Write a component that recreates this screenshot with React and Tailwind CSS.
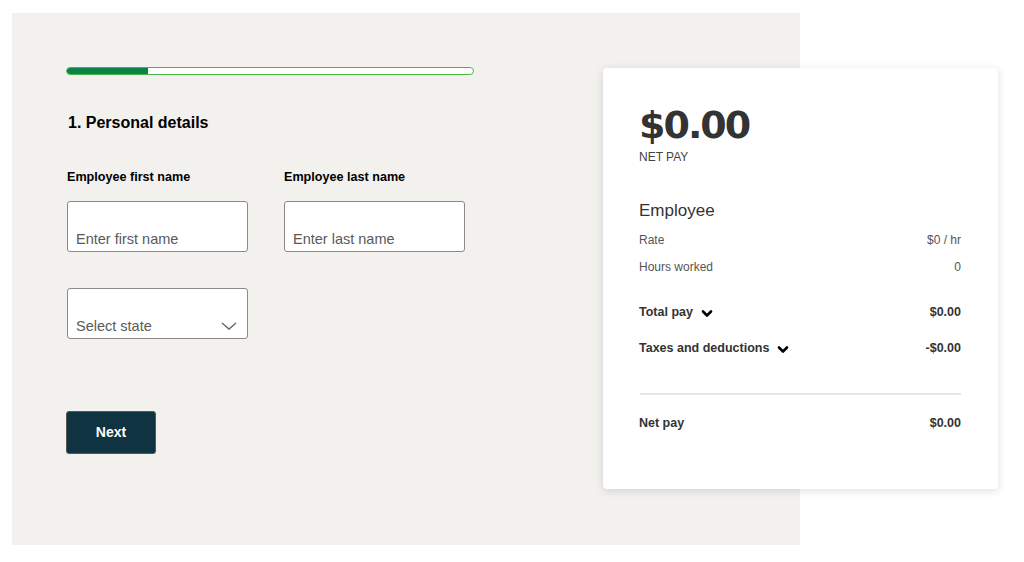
import React from "react";

const Chevron = ({ className }) => (
  <svg className={className} viewBox="0 0 12 8" fill="none" stroke="currentColor" strokeWidth={2.6} strokeLinecap="round" strokeLinejoin="round">
    <path d="M2 2l4 4 4-4" />
  </svg>
);

function TextField({ label, placeholder }) {
  return (
    <div className="w-[181px]">
      <label className="block text-[12.6px] font-bold text-black leading-[14px] h-[14px]">{label}</label>
      <div className="mt-[17px] h-[51px] bg-white border border-[#8a8a8a] rounded-[3px] px-2 flex items-end pb-0">
        <span className="text-[14.5px] text-[#5a5a5a]">{placeholder}</span>
      </div>
    </div>
  );
}

function Row({ label, value, bold, chevron }) {
  return (
    <div className={`flex items-center justify-between ${bold ? "text-[12.5px] font-bold text-[#333]" : "text-[12px] text-[#555]"}`}>
      <span className="flex items-center gap-[8px]">
        {label}
        {chevron && <Chevron className="w-[12px] h-[9px] text-black mt-[3px]" />}
      </span>
      <span>{value}</span>
    </div>
  );
}

export default function App() {
  return (
    <div className="w-[1024px] h-[562px] bg-white pt-[13px] pl-[12px] flex items-start font-['Liberation_Sans',Arial,sans-serif]">
      {/* Form panel */}
      <div className="w-[788px] h-[532px] shrink-0 bg-[#f2f1ee] pt-[54px] pl-[54px]">
        <div className="w-[408px] h-[8px] rounded-full border border-[#4cb548] bg-white overflow-hidden">
          <div className="w-[81px] h-full bg-[#0d8246]" />
        </div>

        <h2 className="mt-[38px] text-[16px] font-bold text-black leading-[20px] pl-[2px]">1. Personal details</h2>

        <div className="mt-[37px] flex gap-[36px] pl-[1px]">
          <TextField label="Employee first name" placeholder="Enter first name" />
          <TextField label="Employee last name" placeholder="Enter last name" />
        </div>

        <div className="mt-[36px] ml-[1px] w-[181px] h-[51px] bg-white border border-[#8a8a8a] rounded-[3px] pl-2 pr-[10px] flex items-end justify-between pb-0">
          <span className="text-[14.5px] text-[#5a5a5a]">Select state</span>
          <svg className="w-[16px] h-[9px] mb-[7px] text-[#666]" viewBox="0 0 16 9" fill="none" stroke="currentColor" strokeWidth={1.4}>
            <path d="M1 1l7 6 7-6" />
          </svg>
        </div>

        <button className="mt-[72px] w-[90px] h-[43px] bg-[#0f3340] border border-[#555] rounded-[3px] text-white text-[14px] font-bold">
          Next
        </button>
      </div>

      {/* Summary card */}
      <div className="relative z-10 -ml-[197px] mt-[55px] w-[395px] h-[421px] shrink-0 bg-white rounded-[4px] shadow-[0_2px_8px_rgba(30,30,60,0.14)] px-[37px] pt-[34px]">
        <div className="font-['DejaVu_Sans',Verdana,sans-serif] font-bold text-[38px] leading-[46px] tracking-[-2px] text-[#333] -ml-[1px]">$0.00</div>
        <div className="text-[12px] text-[#444] leading-[14px] mt-[2px] -ml-[1px]">NET PAY</div>

        <div className="mt-[37px] text-[17px] text-[#333] leading-[20px] -ml-[1px]">Employee</div>
        <div className="mt-[10px] flex flex-col gap-[9px] -ml-[1px]">
          <Row label="Rate" value="$0 / hr" />
          <Row label="Hours worked" value="0" />
        </div>

        <div className="mt-[27px] flex flex-col gap-[17px] -ml-[1px]">
          <Row label="Total pay" value="$0.00" bold chevron />
          <Row label="Taxes and deductions" value="-$0.00" bold chevron />
        </div>

        <div className="mt-[35px] border-t-2 border-[#e6e6ec]" />
        <div className="mt-[19px] -ml-[1px]">
          <Row label="Net pay" value="$0.00" bold />
        </div>
      </div>
    </div>
  );
}
